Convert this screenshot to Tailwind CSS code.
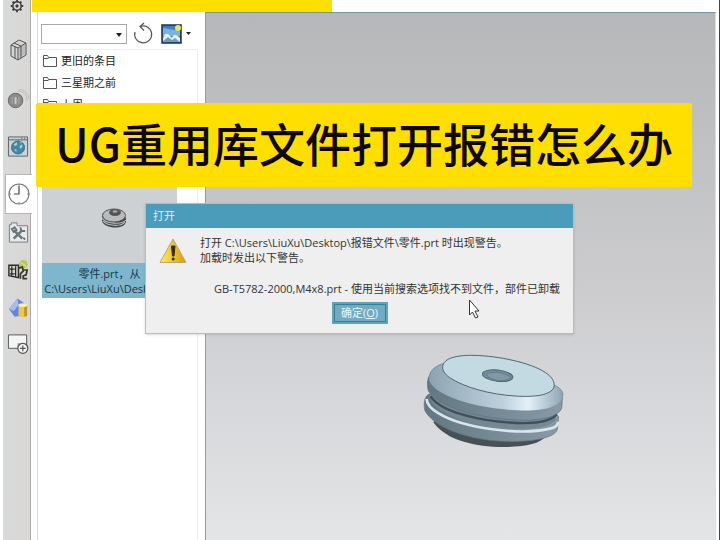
<!DOCTYPE html>
<html lang="zh-CN">
<head>
  <meta charset="UTF-8" />
  <meta name="viewport" content="width=device-width, initial-scale=1" />
  <title>UG重用库文件打开报错怎么办</title>
  <script src="https://cdn.jsdelivr.net/npm/@tailwindcss/browser@4"></script>
</head>
<body class="relative flex h-screen overflow-hidden bg-white font-['Open_Sans','Noto_Sans_CJK_SC',sans-serif] text-[11px] text-[#333]">

  <!-- Resource bar -->
  <nav class="ml-[3px] flex w-7 shrink-0 flex-col border-r border-[#aaa] bg-linear-to-r from-[#d8dada] to-[#dad7d6]" aria-label="资源条">
    <button class="flex h-[26px] justify-center" aria-label="设置">
      <svg class="-mt-0.5 size-4" viewBox="0 0 16 16" fill="none" stroke="#3c3c3c">
        <circle cx="8" cy="8" r="4.2" stroke-width="1.5" />
        <circle cx="8" cy="8" r="1.2" fill="#3c3c3c" />
        <path d="M8 1.8v2M8 12.2v2M1.8 8h2M12.2 8h2M3.6 3.6L5 5M11 11l1.4 1.4M3.6 12.4L5 11M11 5l1.4-1.4" stroke-width="1.8" />
      </svg>
    </button>
    <button class="flex h-12 items-center justify-center" aria-label="装配导航器">
      <svg class="ml-1 h-6 w-5" viewBox="0 0 20 24" fill="#d4d4d4" stroke="#555" stroke-linejoin="round">
        <path d="M2 7l8-5 7 3v12l-8 5-7-4z" />
        <path d="M10 10l6-4v10l-6 4z" fill="#bbb" stroke="none" />
        <path d="M2 7l7 3 8-5M9 10v12M5 5l7 3v12M6 8.500v12" fill="none" />
      </svg>
    </button>
    <button class="flex h-[52px] items-center justify-center" aria-label="信息">
      <svg class="h-6 w-7" viewBox="0 0 28 24" fill="none">
        <path d="M15 3a9 9 0 0 1 10 10M17 1a10 10 0 0 1 10 10" stroke="#bcbcbc" />
        <circle cx="13" cy="12.500" r="7.500" fill="#8b8b8b" stroke="#686868" />
        <path d="M13 9v7" stroke="#ccc" stroke-width="2" />
        <path d="M9.500 16V9M16.500 16V9" stroke="#aaa" />
      </svg>
    </button>
    <button class="flex h-[42px] items-center justify-center" aria-label="网页浏览器">
      <svg class="ml-1 size-6" viewBox="0 0 24 24">
        <path d="M1.500 1.500h20v20h-20z" fill="#ccd2d6" stroke="#56616b" />
        <path d="M2 4.500h19" stroke="#56616b" />
        <path d="M15 3h1M18 3h1" stroke="#7b3f49" />
        <circle cx="11.500" cy="12.500" r="6.800" fill="#4089a4" stroke="#3a7087" />
        <path d="M7 9l3-2 1 2-2 2-2-1zM13 11l3-2v3l-2 2zM8 14l2 1v2l-2-1zM14 6l2 1-2 1z" fill="#a5d0db" />
      </svg>
    </button>
    <button class="mt-1.5 -mr-0.5 ml-0.5 flex h-10 items-center justify-center border-y border-l border-[#b5b5b5] bg-white" aria-label="历史记录" aria-pressed="true">
      <svg class="size-6 shrink-0" viewBox="0 0 24 24" fill="none" stroke="#777">
        <circle cx="12" cy="12" r="10" stroke-width="1.200" />
        <path d="M12 4v8H7" stroke="#444" stroke-width="1.200" />
        <path d="M12 2v2M12 20v2M2 12h2M20 12h2" />
      </svg>
    </button>
    <button class="flex h-9 items-center justify-center" aria-label="加工向导">
      <svg class="ml-1 size-6" viewBox="0 0 24 24" fill="none">
        <path d="M2.500 22.500V4.500h2v-2h6v3h11v17z" fill="#e8eaec" stroke="#737b80" />
        <path d="M7 19l9-9M7 10l9 9" stroke="#69777c" stroke-width="2.600" />
        <path d="M5 9l3-2 2 3-3 2zM14 7l1 4 4 0M17 18l2 2" stroke="#69777c" stroke-width="2" />
      </svg>
    </button>
    <button class="flex h-10 items-center justify-center" aria-label="重用库">
      <svg class="ml-1 size-6" viewBox="0 0 24 24" fill="none">
        <path d="M2 7h10v13l-10-2z" fill="#d8d8ce" stroke="#292929" stroke-width="1.500" />
        <path d="M5 8v10M9 8v11M3 11h5M3 16h5" stroke="#292929" stroke-width="1.300" />
        <circle cx="17" cy="6" r="4.500" fill="#b9c957" />
        <path d="M14 4l6 4" stroke="#e5ebaa" />
        <path d="M12 10l4-1 1 4-3 3v5M17 12h4l-1 5-3 1v3h4" stroke="#343829" stroke-width="1.800" />
      </svg>
    </button>
    <button class="flex h-9 items-center justify-center" aria-label="材料库">
      <svg class="ml-1 size-6" viewBox="0 0 24 24">
        <path d="M2 13L11 2l7 5-3 13-7 1z" fill="#6485dc" />
        <path d="M2 13L11 2l1 7-5 6z" fill="#a5bdf1" />
        <path d="M12 9v11c2 2 7 2 9 0V9z" fill="#e9c84a" />
        <path d="M18 10h3v10l-3 1z" fill="#bd9427" />
        <ellipse cx="16.500" cy="9" rx="4.500" ry="2" fill="#fff0a2" />
      </svg>
    </button>
    <button class="flex h-9 items-center justify-center" aria-label="新建窗口">
      <svg class="ml-1 size-6" viewBox="0 0 24 24" fill="#f4f6f6" stroke="#555">
        <path d="M1.500 2.500h19v14h-19z" />
        <path d="M11 11h9v5h-9z" fill="#a8a8a8" stroke="none" />
        <circle cx="16.500" cy="16.500" r="5.200" stroke-width="1.300" />
        <path d="M13.500 16.500h6M16.500 13.500v6" stroke-width="1.300" />
      </svg>
    </button>
  </nav>

  <!-- History panel -->
  <aside class="ml-1.5 flex w-[169px] shrink-0 flex-col border-r border-l border-[#d8d8d8] border-r-[#999] pt-6">
    <div class="flex h-5 items-center pl-[3px]">
      <div class="relative h-5 w-[86px]">
        <select class="h-5 w-full appearance-none border border-[#aaa] bg-white" aria-label="筛选"><option></option></select>
        <svg class="pointer-events-none absolute top-2 right-1 h-1.5 w-2" viewBox="0 0 8 6"><path d="M1 1h6L4 5z" fill="#222" /></svg>
      </div>
      <button class="ml-1" aria-label="刷新">
        <svg class="size-6" viewBox="0 0 24 24" fill="none" stroke="#555" stroke-width="1.200">
          <path d="M4 10A8.500 8.500 0 1 0 9 4.500" />
          <path d="M13 1L9 4.500l4 4" />
        </svg>
      </button>
      <button class="ml-1.5 flex items-center" aria-label="视图">
        <svg class="h-5 w-[21px]" viewBox="0 0 21 20">
          <path d="M1 1h19v18H1z" fill="#3e80c1" stroke="#1d3154" stroke-width="1.500" />
          <path d="M2 4c5 1 7 1 17 3v5H2z" fill="#78b4df" />
          <path d="M2 15c1-5 4-7 7-3l2 2c1-4 4-4 8 0v4H2z" fill="#e8f3f8" />
          <path d="M2 17l5-4 4 3 3-2 5 4H2z" fill="#719dbd" />
          <circle cx="17" cy="4" r="3" fill="#f4e640" />
        </svg>
        <svg class="ml-0.5 h-1.5 w-2" viewBox="0 0 8 6"><path d="M2 1h5L4.500 4z" fill="#222" /></svg>
      </button>
    </div>
    <div class="mt-[5px] mr-[7px] flex-1 border-t border-r border-[#eee] pl-1">
      <ul class="text-[#222]">
        <li class="flex h-[22px] items-center gap-[3px]">
          <svg class="h-3.5 w-4" viewBox="0 0 16 14" fill="none" stroke="#555"><path d="M1.500 12.500v-11h4l1 2h8v9zM1.500 4.500h5" /></svg>
          <span>更旧的条目</span>
        </li>
        <li class="flex h-[22px] items-center gap-[3px]">
          <svg class="h-3.5 w-4" viewBox="0 0 16 14" fill="none" stroke="#555"><path d="M1.500 12.500v-11h4l1 2h8v9zM1.500 4.500h5" /></svg>
          <span>三星期之前</span>
        </li>
        <li class="flex h-[22px] items-center gap-[3px]">
          <svg class="h-3.5 w-4" viewBox="0 0 16 14" fill="none" stroke="#555"><path d="M1.500 12.500v-11h4l1 2h8v9zM1.500 4.500h5" /></svg>
          <span>上周</span>
        </li>
      </ul>
      <button class="mt-[50px] flex w-[135px] flex-col text-[#173545]">
        <span class="flex h-[97px] w-full items-end justify-center bg-[#cdd1d4] pb-[35px]">
          <svg class="ml-2 h-5 w-[26px]" viewBox="0 0 26 20">
            <path d="M1 8c0-7 23-7 24 3v3c-2 8-22 7-24-1z" fill="#444" />
            <ellipse cx="13" cy="7.500" rx="11.500" ry="6.500" fill="#b9bcbe" stroke="#555" />
            <ellipse cx="14" cy="4.500" rx="6" ry="3.500" fill="#555" />
            <ellipse cx="14" cy="3.500" rx="2.500" ry="1.300" fill="#aaa" />
            <path d="M1 10c3 6 20 7 24 2M2 13c4 5 18 6 22 1" fill="none" stroke="#bbb" stroke-width="1.200" />
          </svg>
        </span>
        <span class="block h-[35px] w-full bg-[#7eb7cd] pt-[3px] text-center leading-[15px] whitespace-nowrap">零件.prt，从<br />C:\Users\LiuXu\Desktop...</span>
      </button>
    </div>
  </aside>

  <!-- Graphics window -->
  <main class="mt-3 mr-1 flex flex-1 border-t border-r border-t-[#7795a8] border-r-[#ddd] bg-linear-to-b from-[#b5b7b8] via-[#cbcbce] to-[#e3e5e7] pt-[332px] pl-[214px]">
    <!-- drawn at three times its size -->
    <svg class="h-[110px] w-[150px] shrink-0" viewBox="0 0 450 330" aria-label="零件模型">
      <defs>
        <linearGradient id="rim">
          <stop offset="0" stop-color="#8ba3b0" />
          <stop offset="0.250" stop-color="#a4b9c6" />
          <stop offset="0.550" stop-color="#bdd1dd" />
          <stop offset="0.740" stop-color="#e4f0f7" />
          <stop offset="0.880" stop-color="#b5c8d4" />
          <stop offset="1" stop-color="#8fa4b1" />
        </linearGradient>
        <linearGradient id="band">
          <stop offset="0" stop-color="#637781" />
          <stop offset="0.500" stop-color="#768a95" />
          <stop offset="1" stop-color="#879aa5" />
        </linearGradient>
      </defs>
      <path d="M40 232C80 290 180 308 260 306C320 305 360 296 378 274L385 245L60 210z" fill="#485057" />
      <path d="M26 148C12 155 10 180 15 198C45 250 150 286 255 289C345 291 403 278 412 254L416 216L400 195L35 145z" fill="url(#band)" stroke="#66757e" stroke-width="2" />
      <path d="M20 162C20 174 30 190 56 205C130 250 300 272 390 251C404 248 414 240 414 230" fill="none" stroke="#dae5eb" stroke-width="8" />
      <path d="M27 130L34 168C70 222 200 250 300 251C365 252 405 238 408 220L410 185z" fill="#748893" />
      <path d="M32 154C62 202 185 230 292 234C355 236 396 226 410 208" fill="none" stroke="#414f58" stroke-width="7" />
      <path d="M26 96C20 112 22 125 25 138C60 190 180 220 290 225C360 228 415 216 425 190L428 150z" fill="url(#band)" stroke="#5f707a" stroke-width="2" />
      <path d="M72 55C45 63 25 78 27 105C40 148 150 188 290 196C370 200 423 187 429 151C429 138 420 128 402 120z" fill="url(#rim)" />
      <path d="M72 55C45 63 25 78 27 105M402 120C420 128 429 138 429 151" fill="none" stroke="#667a85" stroke-width="2" />
      <path d="M68 65C70 38 115 30 162 31C235 33 330 52 377 83C397 97 405 111 402 126C393 151 344 157 285 153C213 149 132 127 89 98C74 87 67 76 68 65z" fill="#c4dae2" stroke="#4f6671" stroke-width="3" />
      <ellipse cx="233" cy="92" rx="46" ry="17" fill="#708c98" stroke="#4e6973" stroke-width="3" transform="rotate(7 233 92)" />
      <path d="M199 89C215 76 255 81 273 99C253 113 212 107 199 89z" fill="#8099a5" stroke="#5b7480" stroke-width="2" />
    </svg>
  </main>
  <div class="absolute inset-y-0 right-0 w-px bg-[#444]"></div>

  <!-- Error dialog -->
  <section class="absolute top-[203px] left-[145px] flex w-[429px] flex-col border border-[#bbb] bg-[#efefef] shadow-sm" role="dialog" aria-labelledby="dialogTitle">
    <h2 id="dialogTitle" class="flex h-6 items-center bg-[#4b9bbb] pl-[7px] text-[#d9f0f8]">打开</h2>
    <div class="flex pt-[7px] pl-[13px]">
      <svg class="mt-[3px] h-[26px] w-7 shrink-0" viewBox="0 0 28 26">
        <defs><linearGradient id="warn"><stop stop-color="#fff05c" /><stop offset="1" stop-color="#d89b00" /></linearGradient></defs>
        <path d="M14 1L27 24.500H1z" fill="url(#warn)" stroke="#bba873" stroke-linejoin="round" />
        <path d="M12.500 8h3.500l-1 10h-1.500z" fill="#38280c" stroke="#38280c" />
        <circle cx="14.200" cy="21" r="1.500" fill="#38280c" />
      </svg>
      <div class="ml-[13px] leading-[15px] whitespace-nowrap">
        <p>打开 C:\Users\LiuXu\Desktop\报错文件\零件.prt 时出现警告。</p>
        <p>加载时发出以下警告。</p>
        <p class="mt-4 ml-3.5">GB-T5782-2000,M4x8.prt - 使用当前搜索选项找不到文件，部件已卸载</p>
      </div>
    </div>
    <button class="mt-1.5 mb-[9px] flex h-[22px] w-14 items-center justify-center self-center border-2 border-[#5ba6bd] bg-[#72abc0] text-[#e6f8ff] outline-1 -outline-offset-3 outline-[#3c7c95]">确定(<u>O</u>)</button>
  </section>

  <svg class="absolute top-[299px] left-[468px] h-5 w-3" viewBox="0 0 12 20"><path d="M1.500 1v15l3-3 3 6 2.500-1-3-6h4z" fill="#fff" stroke="#333" /></svg>

  <!-- Video captions -->
  <div class="absolute top-0 left-8 h-3 w-[300px] bg-[#ffdf00]"></div>
  <h1 class="absolute top-[103px] left-9 flex h-[84px] w-[656px] items-center justify-center rounded-xs bg-[#ffdf00] pb-1.5 font-['Noto_Sans_CJK_SC',sans-serif] text-[46px] leading-none font-medium whitespace-nowrap text-[#100600]">UG重用库文件打开报错怎么办</h1>
</body>
</html>
